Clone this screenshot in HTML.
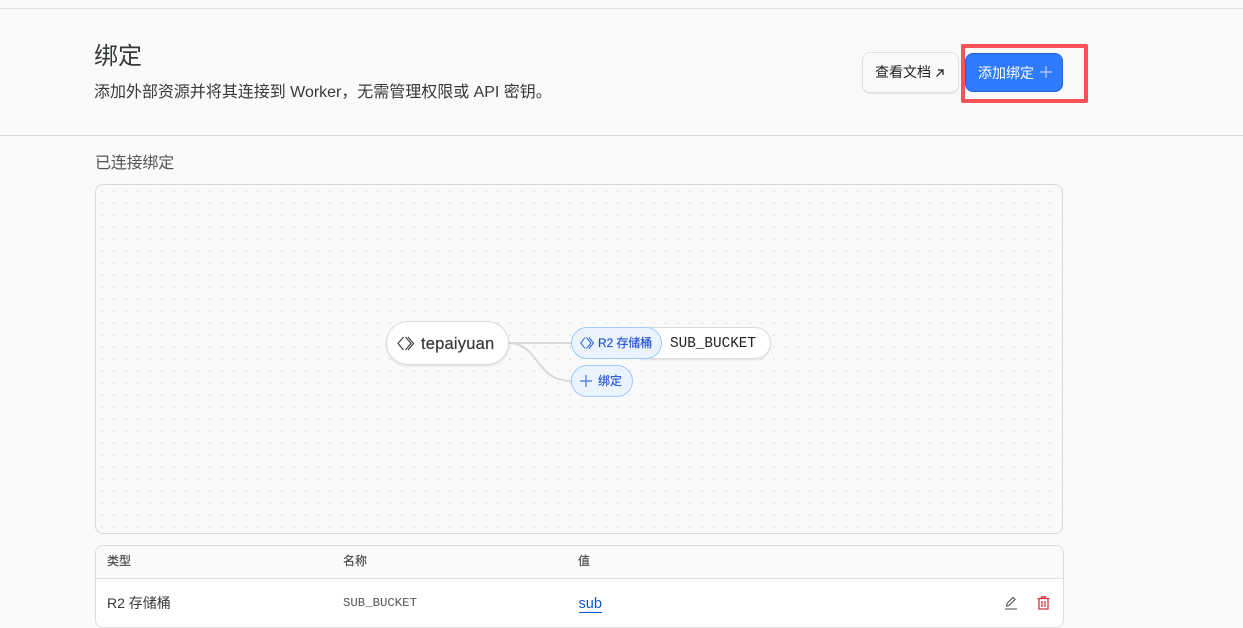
<!DOCTYPE html>
<html lang="zh-CN"><head><meta charset="utf-8"><style>
html,body{margin:0;padding:0}
body{width:1243px;height:628px;position:relative;overflow:hidden;background:#fafafa;font-family:"Liberation Sans","Noto Sans CJK SC",sans-serif;color:#36393a}
.a{position:absolute;white-space:nowrap;box-sizing:border-box}
svg{display:block;overflow:visible}
</style></head><body>
<div class="a" style="left:0;top:8px;width:1243px;height:1px;background:#e0e0e0"></div>
<div class="a" style="left:0;top:135px;width:1243px;height:1px;background:#d9d9d9"></div>
<div class="a" style="left:94px;top:40px;font-size:24px;line-height:34px;color:#36393a">绑定</div>
<div class="a" style="left:94px;top:82px;font-size:16px;line-height:22px;color:#36393a;letter-spacing:-.02px">添加外部资源并将其连接到 Worker，无需管理权限或 API 密钥。</div>
<div class="a" style="left:862px;top:52px;width:97px;height:41px;border:1px solid #e0e0e0;border-radius:8px;box-shadow:0 1px 1px rgba(0,0,0,.08);background:#fafafa;font-size:14px;line-height:39px;padding-left:12px;color:#222">查看文档</div>
<svg class="a" style="left:934px;top:67px" width="12" height="12" viewBox="0 0 12 12" fill="none" stroke="#36393a" stroke-width="1.4"><path d="M2.5 9.5L9 3M4 3H9V8"/></svg>
<div class="a" style="left:965px;top:53px;width:98px;height:39px;border:1px solid #1c66e0;border-radius:8px;background:#2f7bff;color:#fff;font-size:14px;line-height:38px;padding-left:12px">添加绑定</div>
<svg class="a" style="left:1040px;top:66px" width="12" height="12" viewBox="0 0 12 12" stroke="#b5d0ff" stroke-width="1.3"><path d="M6 0V12M0 6H12"/></svg>
<div class="a" style="left:961px;top:44px;width:127px;height:59px;border:4px solid #f9525a;border-radius:2px"></div>
<div class="a" style="left:95px;top:153px;font-size:16px;line-height:22px;color:#555;letter-spacing:-.2px">已连接绑定</div>
<div class="a" style="left:95px;top:184px;width:968px;height:350px;border:1px solid #d9d9d9;border-radius:8px;background-color:#fafafa;background-image:radial-gradient(circle at 1px 1px,#e6e6e6 1px,transparent 1.1px);background-size:12px 12px;background-position:5px 5px"></div>
<svg class="a" style="left:500px;top:335px" width="80" height="50" fill="none" stroke="#d9d9d9" stroke-width="2"><path d="M8 8H72"/><path d="M8 8C40 8 34 46 72 46"/></svg>
<div class="a" style="left:386px;top:321px;width:123px;height:44px;border:1px solid #dcdcdc;border-radius:22px;background:#fff;box-shadow:0 1px 2px rgba(0,0,0,.12);font-size:16.5px;letter-spacing:.2px;line-height:44px;padding-left:34px;color:#36393a;-webkit-text-stroke:.2px #36393a">tepaiyuan</div>
<svg class="a" style="left:397px;top:335.5px" width="17" height="15" viewBox="0 0 17 15" fill="none" stroke="#36393a" stroke-width="1.1"><path d="M6.5 1L1 7.5L6.5 14M8.5 1L14 7.5L8.5 14M11 1L16.5 7.5L11 14"/></svg>
<div class="a" style="left:640px;top:327px;width:131px;height:32px;border:1px solid #dcdcdc;border-left:0;border-radius:0 16px 16px 0;background:#fff;box-shadow:0 1px 2px rgba(0,0,0,.1);font-family:'Liberation Mono','Noto Sans CJK SC',monospace;font-size:14.33px;line-height:32px;padding-left:30px;color:#222">SUB_BUCKET</div>
<div class="a" style="left:571px;top:327px;width:91px;height:32px;border:1px solid #9cc9ff;border-radius:16px;background:#ebf3ff;font-size:12px;letter-spacing:-.1px;line-height:30px;padding-left:26px;color:#1d50d6;-webkit-text-stroke:.15px #1d50d6">R2 存储桶</div>
<svg class="a" style="left:580px;top:337px" width="14" height="12" viewBox="0 0 14 12" fill="none" stroke="#2d62dc" stroke-width="1"><path d="M5 .5L.8 6L5 11.5M6.5 .5L11 6L6.5 11.5M9 .5L13.5 6L9 11.5"/></svg>
<div class="a" style="left:571px;top:365px;width:62px;height:32px;border:1px solid #9cc9ff;border-radius:16px;background:#ebf3ff;font-size:12px;line-height:30px;padding-left:26px;color:#1d50d6;-webkit-text-stroke:.15px #1d50d6">绑定</div>
<svg class="a" style="left:580px;top:375px" width="12" height="12" viewBox="0 0 12 12" stroke="#5b86e8" stroke-width="1.4"><path d="M6 0V12M0 6H12"/></svg>
<div class="a" style="left:94.5px;top:545px;width:969px;height:83px;border:1px solid #dedede;border-radius:8px;background:#fff;overflow:hidden">
<div style="height:32px;background:#fafafa;border-bottom:1px solid #e0e0e0"></div></div>
<div class="a" style="left:107px;top:553px;font-size:12px;line-height:17px;color:#444;-webkit-text-stroke:.15px #444">类型</div>
<div class="a" style="left:343px;top:553px;font-size:12px;line-height:17px;color:#444;-webkit-text-stroke:.15px #444">名称</div>
<div class="a" style="left:578px;top:553px;font-size:12px;line-height:17px;color:#444;-webkit-text-stroke:.15px #444">值</div>
<div class="a" style="left:107px;top:593px;font-size:14px;line-height:20px;color:#36393a">R2 存储桶</div>
<div class="a" style="left:343px;top:594.5px;font-family:'Liberation Mono',monospace;font-size:12.33px;line-height:17px;color:#555">SUB_BUCKET</div>
<div class="a" style="left:578.5px;top:594px;font-size:14.5px;line-height:20px;color:#0b55d1;border-bottom:1px solid #0b55d1;height:19px">sub</div>
<svg class="a" style="left:1005px;top:596px" width="12" height="14" viewBox="0 0 12 14" fill="none" stroke="#444" stroke-width="1"><path d="M1.5 10L2 7.5L8 1.5L10 3.5L4 9.5Z"/><path d="M0 13H12" stroke="#888" stroke-width="1.5"/></svg>
<svg class="a" style="left:1037px;top:596px" width="13" height="14" viewBox="0 0 13 14" fill="none" stroke="#d5323f" stroke-width="1.3"><path d="M0.5 2.5H12.5M4.5 2.5V.8H8.5V2.5M2 2.5V13H11V2.5M5 5V11M8 5V11"/></svg>
</body></html>
